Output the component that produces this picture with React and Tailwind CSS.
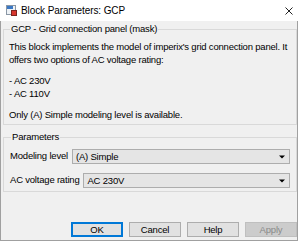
import React from "react";

function Dropdown({ value }) {
  return (
    <div className="flex-1 h-[15px] bg-[#e5e5e5] border border-[#adadad] flex items-center pl-[3px] pr-[4px]">
      <span className="flex-1 leading-[13px]">{value}</span>
      <svg width="6" height="4" viewBox="0 0 6 4">
        <path d="M0 0.5 L6 0.5 L3 3.5 Z" fill="#000" />
      </svg>
    </div>
  );
}

function Button({ children, variant }) {
  const base =
    "w-[52px] h-[15px] flex items-center justify-center leading-[13px] border";
  if (variant === "default")
    return (
      <div className={`${base} bg-[#e1e1e1] border-[#0078d7] shadow-[inset_0_0_0_1px_#0078d7]`}>
        {children}
      </div>
    );
  if (variant === "disabled")
    return (
      <div className={`${base} bg-[#cccccc] border-[#bfbfbf] text-[#8a8a8a]`}>{children}</div>
    );
  return <div className={`${base} bg-[#e1e1e1] border-[#adadad]`}>{children}</div>;
}

export default function App() {
  return (
    <div className="w-[300px] h-[241px] bg-white overflow-hidden flex flex-col font-['Liberation_Sans',Arial,sans-serif] text-[9.5px] tracking-[-0.2px] text-black">
      {/* Title bar */}
      <div className="h-[21px] shrink-0 bg-white flex items-center pl-[6px] pr-[7px]">
        <svg width="11" height="11" viewBox="0 0 11 11" className="shrink-0">
          <rect x="0.5" y="0.5" width="9" height="9" fill="#eef2f6" stroke="#8a97a5" />
          <rect x="1" y="1" width="6" height="3" fill="#3b78c4" />
          <rect x="5.5" y="5.5" width="5" height="5" fill="#d8352d" stroke="#7a2420" />
        </svg>
        <span className="ml-[4px] text-[10px] tracking-[-0.1px] leading-[12px] flex-1">
          Block Parameters: GCP
        </span>
        <svg width="8" height="8" viewBox="0 0 8 8" className="shrink-0">
          <path d="M0.5 0.5 L7.5 7.5 M7.5 0.5 L0.5 7.5" stroke="#222" strokeWidth="1" />
        </svg>
      </div>

      {/* Window body */}
      <div className="flex flex-1 min-h-0">
        <div className="w-[298px] h-[220px] bg-[#f0f0f0] border-l border-r border-b border-[#a0a0a0] flex flex-col pl-[2px]">
          <fieldset className="mt-[2px] border border-[#d9d9d9] pl-[5px] pr-[4px] pt-[5px] pb-[3px] leading-[13px]">
            <legend className="ml-[1px] px-[1px] leading-[12px]">
              GCP - Grid connection panel (mask)
            </legend>
            <p className="whitespace-nowrap">
              This block implements the model of imperix's grid connection panel. It
              <br />
              offers two options of AC voltage rating:
            </p>
            <p className="mt-[8px]">
              - AC 230V
              <br />- AC 110V
            </p>
            <p className="mt-[8px]">Only (A) Simple modeling level is available.</p>
          </fieldset>

          <fieldset className="mt-[6px] border border-[#d9d9d9] pl-[6px] pr-[6px] pt-[6px] pb-[3px]">
            <legend className="ml-[1px] px-[1px] leading-[12px]">Parameters</legend>
            <div className="flex items-center gap-[4px]">
              <span className="whitespace-nowrap">Modeling level</span>
              <Dropdown value="(A) Simple" />
            </div>
            <div className="flex items-center gap-[4px] mt-[9px]">
              <span className="whitespace-nowrap">AC voltage rating</span>
              <Dropdown value="AC 230V" />
            </div>
          </fieldset>

          <div className="flex-1" />
          <div className="flex justify-end gap-[6px] mb-[3px]">
            <Button variant="default">OK</Button>
            <Button>Cancel</Button>
            <Button>Help</Button>
            <Button variant="disabled">Apply</Button>
          </div>
        </div>
        <div className="flex-1 bg-white" />
      </div>
    </div>
  );
}
